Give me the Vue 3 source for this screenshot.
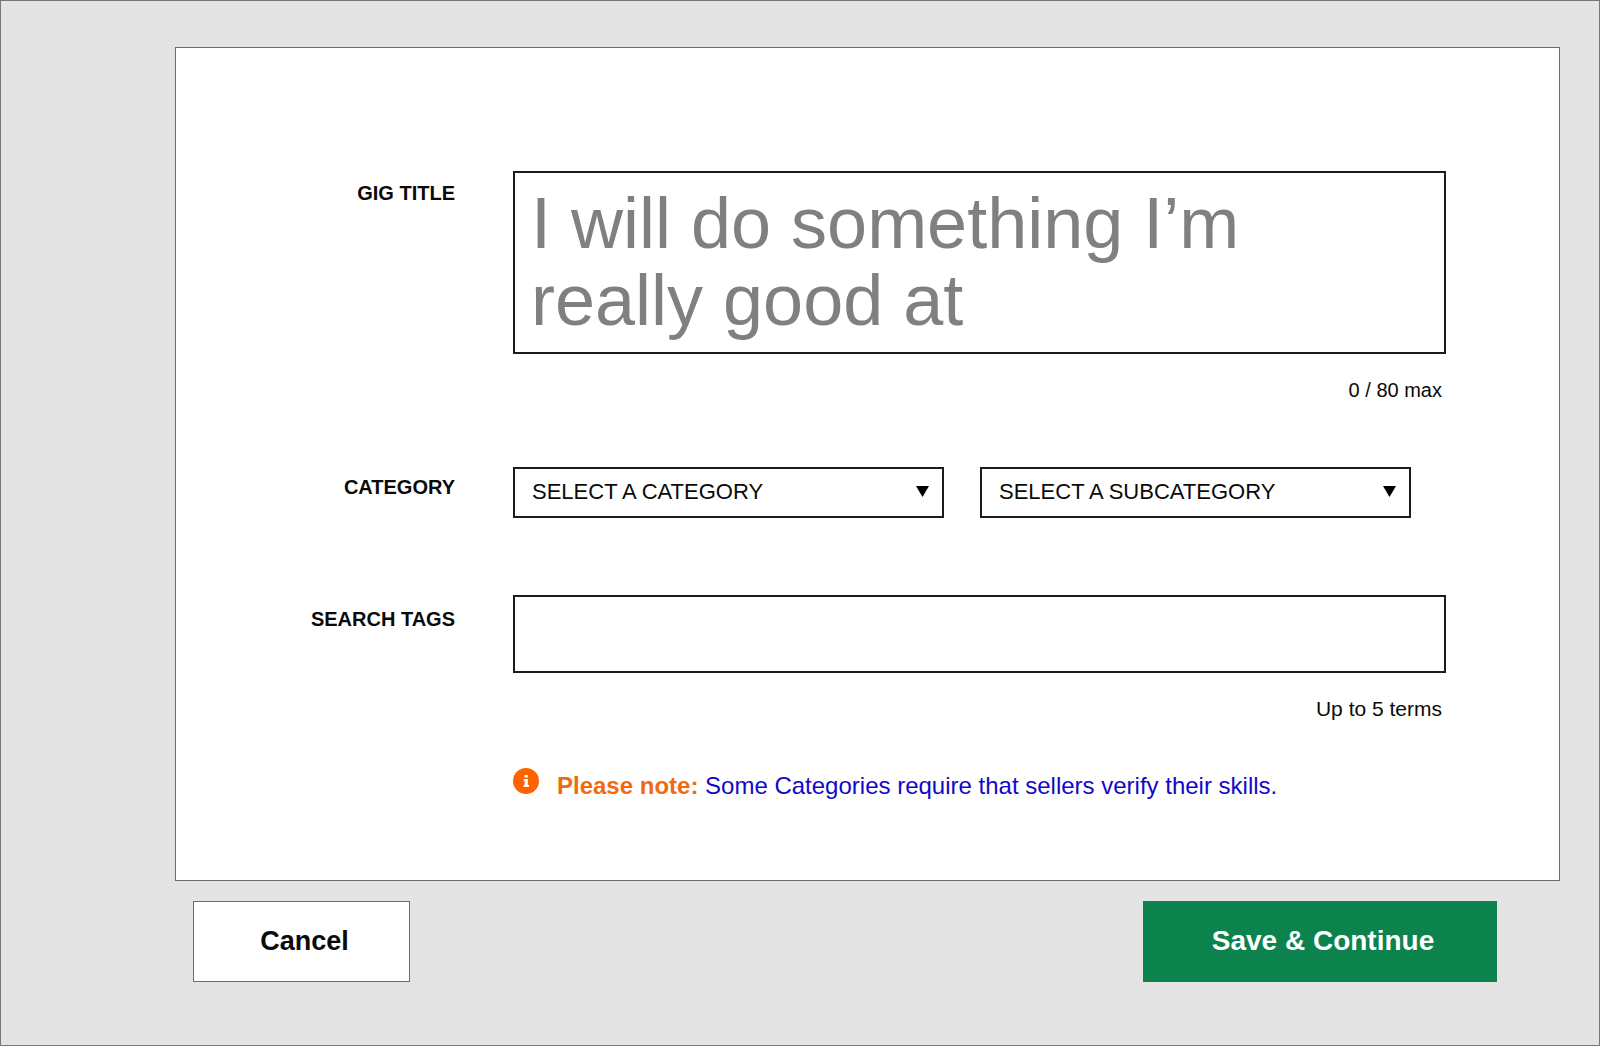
<script setup>
import { computed, ref } from 'vue'

const title = ref('')
const category = ref('')
const subcategory = ref('')
const tags = ref('')
const maxLength = 80
const used = computed(() => title.value.length)
</script>

<template>
  <form class="page" @submit.prevent>
    <section class="card">
      <div class="row">
        <label class="label" for="gig-title">GIG TITLE</label>
        <div class="field">
          <textarea
            id="gig-title"
            v-model="title"
            class="box title"
            :maxlength="maxLength"
            placeholder="I will do something I’m really good at"
          ></textarea>
          <p class="hint counter">{{ used }} / {{ maxLength }} max</p>
        </div>
      </div>

      <div class="row category-row">
        <label class="label" for="category">CATEGORY</label>
        <div class="selects">
          <div class="select">
            <select id="category" v-model="category" class="box">
              <option value="">SELECT A CATEGORY</option>
            </select>
            <svg class="arrow" viewBox="0 0 13 11" aria-hidden="true"><path d="M0 0h13L6.5 11z" /></svg>
          </div>
          <div class="select">
            <select v-model="subcategory" class="box" aria-label="Subcategory">
              <option value="">SELECT A SUBCATEGORY</option>
            </select>
            <svg class="arrow" viewBox="0 0 13 11" aria-hidden="true"><path d="M0 0h13L6.5 11z" /></svg>
          </div>
        </div>
      </div>

      <div class="row tags-row">
        <label class="label" for="tags">SEARCH TAGS</label>
        <div class="field">
          <input id="tags" v-model="tags" class="box tags" type="text" />
          <p class="hint terms">Up to 5 terms</p>
          <div class="note">
            <svg class="info" viewBox="0 0 26 26" aria-hidden="true">
              <circle cx="13" cy="13" r="13" fill="#ff6200" />
              <path fill="#fff" d="M11.4 7h3.4v2.6h-3.4zM10.6 11h4.2v6h1.2v2h-5.4v-2h1v-4h-1z" />
            </svg>
            <p class="note-text">
              <strong>Please note:</strong>{{ ' ' }}<a href="#">Some Categories require that sellers verify their skills.</a>
            </p>
          </div>
        </div>
      </div>
    </section>

    <div class="actions">
      <button class="button cancel" type="button">Cancel</button>
      <button class="button save" type="submit">Save &amp; Continue</button>
    </div>
  </form>
</template>

<style>
body {
  margin: 0;
  background: #e4e4e4;
}
</style>

<style scoped>
.page,
.page * {
  box-sizing: border-box;
}

.page {
  min-height: 100vh;
  padding: 46px 39px 62px 174px;
  border: 1px solid #77787a;
  background: #e4e4e4;
  color: #0a0a0a;
  font-family: "Liberation Sans", Arial, sans-serif;
}

.card {
  padding: 123px 113px 80px 0;
  border: 1px solid #6c6c6c;
  background: #fff;
}

.row {
  display: grid;
  grid-template-columns: 279px minmax(0, 1fr);
  column-gap: 58px;
  align-items: start;
}

.category-row {
  margin-top: 65px;
}

.tags-row {
  margin-top: 77px;
}

.label {
  padding-top: 10px;
  font-size: 20px;
  font-weight: 700;
  line-height: 24px;
  text-align: right;
}

.category-row .label {
  padding-top: 8px;
}

.tags-row .label {
  padding-top: 12px;
}

.box {
  display: block;
  width: 100%;
  margin: 0;
  border: 2px solid #1c1c1c;
  border-radius: 0;
  background: #fff;
  color: #0a0a0a;
  font-family: inherit;
}

.title {
  height: 183px;
  padding: 12px 60px 12px 16px;
  font-size: 72px;
  line-height: 77px;
  resize: none;
  overflow: hidden;
}

.title::placeholder {
  color: #808080;
  opacity: 1;
}

.hint {
  margin: 24px 4px 0 0;
  line-height: 24px;
  text-align: right;
}

.counter {
  font-size: 20px;
}

.terms {
  font-size: 21px;
}

.selects {
  display: grid;
  grid-template-columns: 1fr 1fr;
  gap: 36px;
  padding-right: 35px;
}

.select {
  position: relative;
}

.select .box {
  height: 51px;
  padding: 0 40px 2px 17px;
  font-size: 22px;
  appearance: none;
}

.arrow {
  position: absolute;
  top: 19px;
  right: 15px;
  width: 13px;
  height: 11px;
  pointer-events: none;
}

.tags {
  height: 78px;
  padding: 0 17px;
  font-size: 22px;
}

.note {
  display: flex;
  gap: 18px;
  height: 32px;
  margin-top: 47px;
}

.info {
  flex: none;
  width: 26px;
  height: 26px;
}

.note-text {
  align-self: flex-end;
  margin: 0;
  font-size: 24px;
  line-height: 28px;
}

.note-text strong {
  color: #f26a0f;
}

.note-text a {
  color: #1408c8;
  text-decoration: none;
}

.actions {
  display: flex;
  justify-content: space-between;
  margin-top: 20px;
  padding: 0 63px 0 18px;
}

.button {
  height: 81px;
  padding: 0 0 0 6px;
  border: 0;
  border-radius: 0;
  font-family: inherit;
  font-size: 28px;
  font-weight: 700;
}

.cancel {
  width: 217px;
  border: 1px solid #6c6c6c;
  background: #fff;
  color: #0a0a0a;
  font-size: 27px;
}

.save {
  width: 354px;
  padding-bottom: 2px;
  background: #0c824d;
  color: #fff;
}
</style>
